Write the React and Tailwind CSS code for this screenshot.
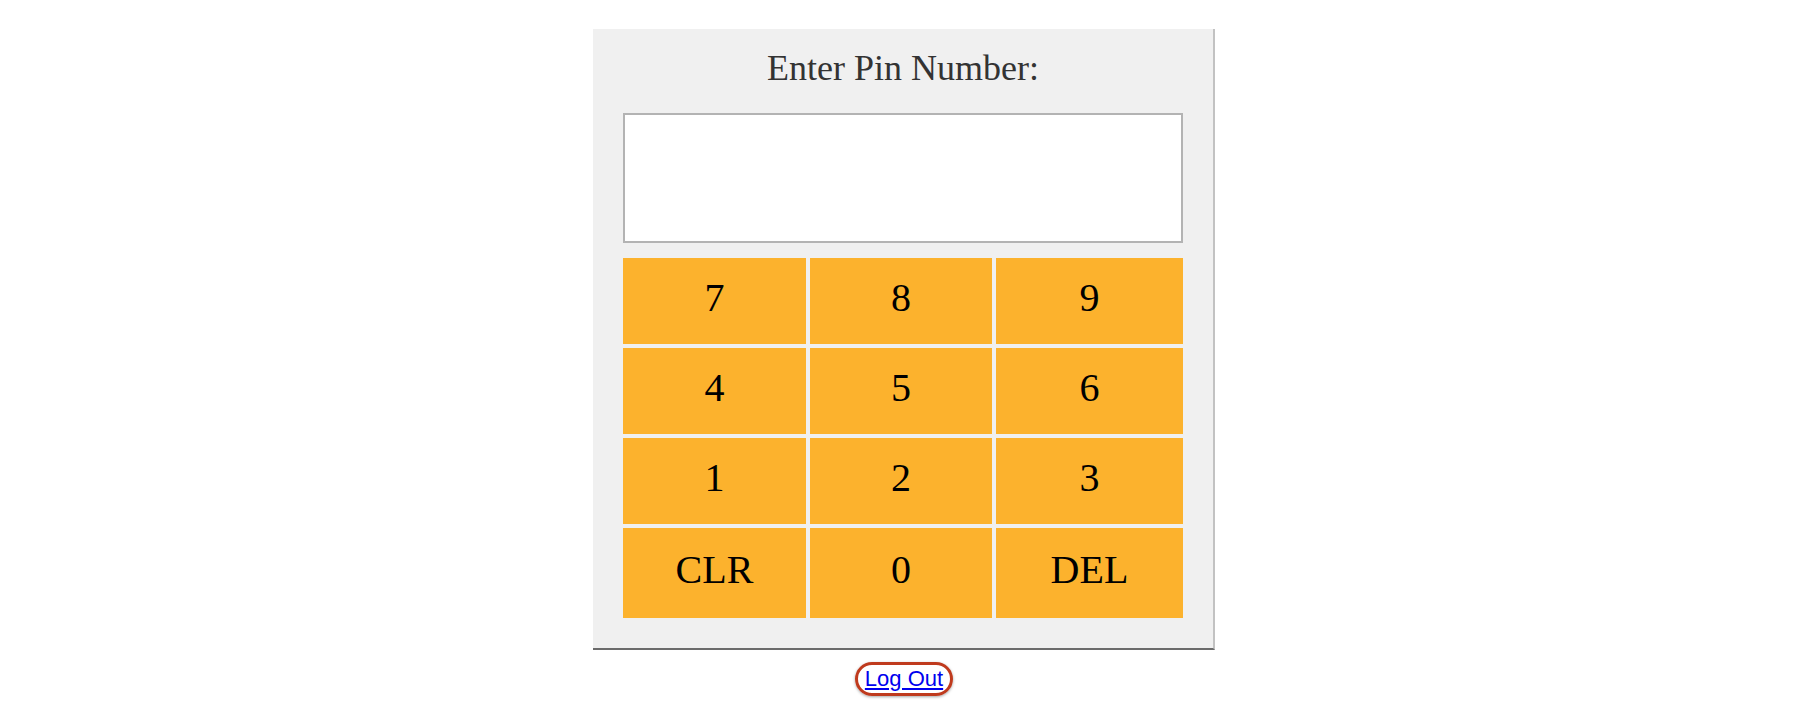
import React from "react";

const keys = ["7", "8", "9", "4", "5", "6", "1", "2", "3", "CLR", "0", "DEL"];

export default function App() {
  return (
    <div
      className="min-h-[704px] w-full bg-white pl-[12px] pt-[29px] flex flex-col items-center"
      style={{ fontFamily: '"Liberation Serif", "Times New Roman", serif' }}
    >
      <div className="w-[622px] bg-[#f0f0f0] border-r-2 border-b-2 border-r-[#c2c2c2] border-b-[#6b6b6b] px-[30px] pt-[19px] pb-[30px]">
        <h1 className="text-[36px] leading-[40px] text-center text-[#333333] font-normal">
          Enter Pin Number:
        </h1>
        <div className="mt-[25px] h-[130px] border-2 border-[#b3b3b3] bg-white" />
        <div className="mt-[15px] grid grid-cols-[183px_182px_187px] grid-rows-[86px_86px_86px_90px] gap-[4px]">
          {keys.map((k) => (
            <button
              key={k}
              type="button"
              className="bg-[#fcb22d] text-black text-[40px] leading-[46px] flex items-center justify-center pb-[7px]"
              style={{ fontFamily: '"Liberation Serif", "Times New Roman", serif' }}
            >
              {k}
            </button>
          ))}
        </div>
      </div>
      <a
        href="#"
        className="mt-[12px] inline-block rounded-full border-[3px] border-[#bf3a1d] px-[7px] py-[1px] text-[22px] leading-[26px] text-[#0000ee] underline shadow-[0_1px_3px_rgba(0,0,0,0.35)]"
        style={{ fontFamily: '"Liberation Sans", Arial, sans-serif' }}
      >
        Log Out
      </a>
    </div>
  );
}
